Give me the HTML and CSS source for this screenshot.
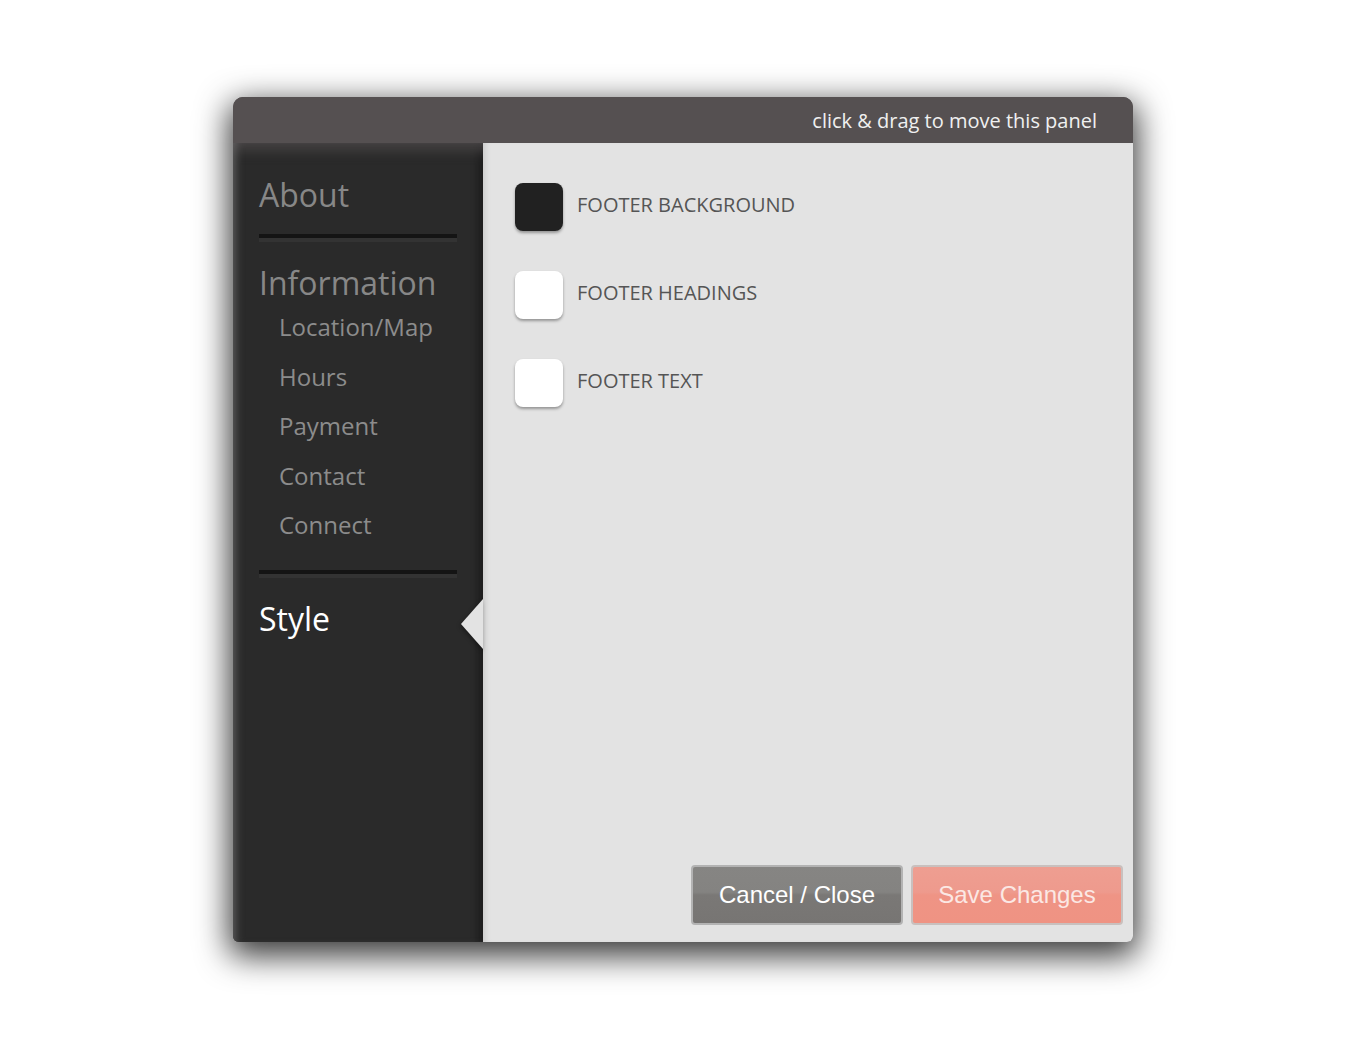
FILE: index.html
```html
<!DOCTYPE html>
<html lang="en">
<head>
<meta charset="utf-8">
<title>Footer Style Panel</title>
<link rel="stylesheet" href="styles.css">
</head>
<body>
<div class="panel">
  <div class="panel-header">click &amp; drag to move this panel</div>
  <div class="panel-body">
    <nav class="sidebar">
      <div class="nav-main">About</div>
      <div class="divider"></div>
      <div class="nav-main">Information</div>
      <ul class="nav-sub">
        <li>Location/Map</li>
        <li>Hours</li>
        <li>Payment</li>
        <li>Contact</li>
        <li>Connect</li>
      </ul>
      <div class="divider"></div>
      <div class="nav-main active">Style</div>
    </nav>
    <section class="content">
      <div class="options">
        <div class="option">
          <span class="swatch swatch-dark"></span>
          <span class="label">FOOTER BACKGROUND</span>
        </div>
        <div class="option">
          <span class="swatch"></span>
          <span class="label">FOOTER HEADINGS</span>
        </div>
        <div class="option">
          <span class="swatch"></span>
          <span class="label">FOOTER TEXT</span>
        </div>
      </div>
      <div class="actions">
        <button class="btn btn-cancel">Cancel / Close</button>
        <button class="btn btn-save">Save Changes</button>
      </div>
    </section>
  </div>
</div>
</body>
</html>
```

FILE: styles.css
```css
html, body {
  margin: 0;
  padding: 0;
  background: #ffffff;
}

body {
  font-family: "Open Sans", "Liberation Sans", sans-serif;
  min-height: 1042px;
  padding-top: 97px;
  padding-bottom: 1px;
  box-sizing: border-box;
}

.panel {
  width: 900px;
  height: 845px;
  margin: 0 0 0 233px;
  display: flex;
  flex-direction: column;
  border-radius: 10px 10px 6px 6px;
  background: #555051;
  box-shadow: 0 10px 32px 4px rgba(0, 0, 0, 0.78);
  overflow: hidden;
}

.panel-header {
  height: 46px;
  flex: none;
  background: #555051;
  color: #f0f0f0;
  font-size: 20px;
  line-height: 48px;
  text-align: right;
  padding-right: 36px;
  overflow: hidden;
}

.panel-body {
  flex: 1;
  display: flex;
  min-height: 0;
}

.sidebar {
  width: 250px;
  flex: none;
  box-sizing: border-box;
  padding: 32px 26px 0 26px;
  background: #2a2a2a;
  box-shadow:
    inset 8px 0 8px -5px rgba(120, 120, 120, 0.6),
    inset 0 14px 12px -6px rgba(70, 67, 68, 0.9),
    inset -9px 0 8px -6px rgba(0, 0, 0, 0.5);
  position: relative;
  z-index: 2;
}

.nav-main {
  font-size: 32px;
  line-height: 40px;
  color: #878787;
  position: relative;
}

.nav-main.active {
  color: #ffffff;
}

.nav-main.active::after {
  content: "";
  position: absolute;
  top: 0;
  right: -26px;
  width: 0;
  height: 0;
  border-top: 25px solid transparent;
  border-bottom: 25px solid transparent;
  border-right: 22px solid #e3e3e3;
  filter: drop-shadow(-1px 2px 2px rgba(0, 0, 0, 0.35));
}

.divider {
  height: 4px;
  background: #141414;
  border-bottom: 4px solid #333333;
  margin: 19px 0 21px 0;
}

.nav-sub {
  list-style: none;
  margin: -1px 0 0 0;
  padding: 0 0 0 20px;
}

.nav-sub li {
  font-size: 24px;
  line-height: 49.6px;
  color: #8c8c8c;
}

.nav-sub + .divider {
  margin-top: 20px;
}

.content {
  flex: 1;
  background: #e3e3e3;
  display: flex;
  flex-direction: column;
  box-shadow: inset 6px 0 6px -4px rgba(0, 0, 0, 0.12);
  position: relative;
  z-index: 1;
}

.options {
  display: flex;
  flex-direction: column;
  gap: 40px;
  padding: 40px 32px 0 32px;
}

.option {
  display: flex;
  align-items: center;
  gap: 14px;
  height: 48px;
}

.swatch {
  width: 48px;
  height: 48px;
  flex: none;
  border-radius: 8px;
  background: #ffffff;
  box-shadow: 0 2px 3px rgba(0, 0, 0, 0.35);
}

.swatch-dark {
  background: #212121;
}

.label {
  font-size: 20px;
  color: #555555;
  padding-bottom: 5px;
}

.actions {
  margin-top: auto;
  display: flex;
  justify-content: flex-end;
  gap: 8px;
  padding: 0 10px 17px 0;
}

.btn {
  width: 212px;
  height: 60px;
  box-sizing: border-box;
  border: 2px solid #b3b3b3;
  border-radius: 4px;
  font-family: "Liberation Sans", Arial, sans-serif;
  font-size: 24px;
  padding: 0 0 1px 0;
  cursor: pointer;
}

.btn-cancel {
  color: #ffffff;
  background: linear-gradient(to bottom, #868583 0%, #848381 45%, #7a7876 50%, #777573 100%);
}

.btn-save {
  color: #fbe8e4;
  background: linear-gradient(to bottom, #ee9e91 0%, #ee9a8d 45%, #ef9485 50%, #ef9383 100%);
  border-color: #c9c0be;
}
```
